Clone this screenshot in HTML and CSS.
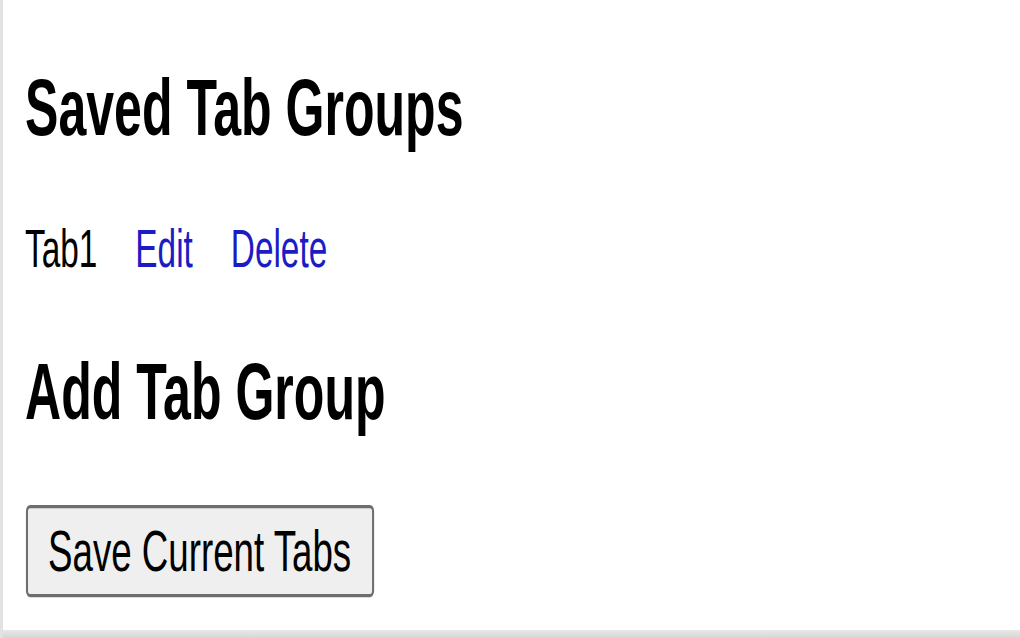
FILE: index.html
```html
<!DOCTYPE html>
<html lang="en">
<head>
  <meta charset="UTF-8" />
  <meta name="viewport" content="width=device-width, initial-scale=1"/>
  <title>Tab Groups</title>
  <link rel="stylesheet" href="styles.css">
</head>
<body>

<div class="screen">
  <div class="view">
    <!-- popup, zoomed up to fill the window -->
    <div class="popup">
      <h2>Saved Tab Groups</h2>
      <div class="group">
        <span class="group-name">Tab1</span>
        <a href="#" class="edit">Edit</a>
        <a href="#" class="delete">Delete</a>
      </div>
      <h2 class="add-title">Add Tab Group</h2>
      <button class="save-btn">Save Current Tabs</button>
    </div>
  </div>
  <div class="edge"></div>
</div>

</body>
</html>
```

FILE: styles.css
```css
html, body { margin:0; padding:0; background:#fff; }
body { font-family: "Liberation Sans", Arial, sans-serif; }

.screen {
  width:1020px; height:638px; display:flex; flex-direction:column;
  box-sizing:border-box; border-left:3px solid #e2e2e2;
}
.view { flex:1; overflow:hidden; background:#fff; }
.edge { height:8px; background:linear-gradient(#e8e8e8, #d6d6d6); }

.popup {
  width:490px; height:190px; box-sizing:border-box;
  padding:18.5px 0 0 10.6px;
  transform:scale(2.085, 3.3); transform-origin:0 0;
  color:#000;
}
.popup h2 { font-size:24px; font-weight:bold; margin:0; line-height:27.6px; }

.group {
  display:flex; gap:18.2px; margin-top:21px;
  font-size:16px; line-height:18.4px;
}
.group a { color:#1c1cc4; text-decoration:none; }

.popup .add-title { margin-top:19px; }

.save-btn {
  margin-top:21.4px; font-family:inherit; font-size:17.6px; line-height:20.2px;
  padding:2.7px 10px; background:#efefef; color:#000;
  border:1px solid #6e6e6e; border-radius:2px;
}
```
